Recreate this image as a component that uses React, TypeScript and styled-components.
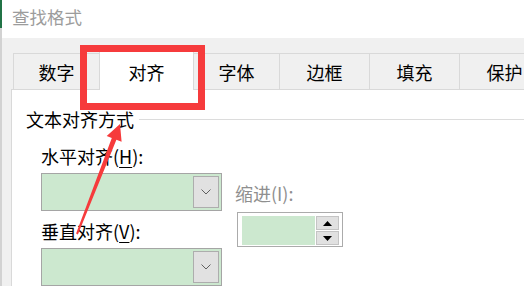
import React from "react";
import styled, { createGlobalStyle } from "styled-components";

const GlobalStyle = createGlobalStyle`
  html, body {
    margin: 0;
    padding: 0;
    background: #ffffff;
  }
  body {
    font-family: "Noto Sans CJK SC", "Noto Sans", sans-serif;
    color: #000000;
  }
`;

const Screen = styled.div`
  position: relative;
  display: flex;
  width: 524px;
  height: 286px;
  overflow: hidden;
`;

const EdgeStrip = styled.div`
  width: 2px;
  flex-shrink: 0;
  background: linear-gradient(to bottom, #217346 0, #217346 28px, #d2d2d2 28px);
`;

const Dialog = styled.div`
  flex: 1;
  display: flex;
  flex-direction: column;
`;

const TitleBar = styled.div`
  height: 38px;
  flex-shrink: 0;
  padding-left: 10px;
  box-sizing: border-box;
  background: #ffffff;
  font-size: 17.5px;
  line-height: 34px;
  color: #9c9c9c;
`;

const Body = styled.div`
  flex: 1;
  display: flex;
  flex-direction: column;
  padding-left: 9px;
  background: #f0f0f0;
`;

const TabStrip = styled.div`
  display: flex;
  align-items: flex-end;
  height: 36px;
  margin: 15px 0 0 2px;
  position: relative;
  z-index: 1;
`;

const Tab = styled.div<{ $width: number; $active?: boolean }>`
  flex-shrink: 0;
  box-sizing: border-box;
  width: ${(p) => p.$width}px;
  height: ${(p) => (p.$active ? 43 : 36)}px;
  margin: ${(p) => (p.$active ? "0 0 -1px -1px" : "0")};
  padding-top: ${(p) => (p.$active ? 6 : 0)}px;
  display: flex;
  align-items: center;
  justify-content: center;
  background: ${(p) => (p.$active ? "#ffffff" : "#f0f0f0")};
  border-top: 1px solid #d9d9d9;
  border-right: 1px solid #d9d9d9;
  border-left: ${(p) => (p.$active ? "1px solid #d9d9d9" : "none")};
  font-size: 18px;
  line-height: 24px;
  &:first-child {
    border-left: 1px solid #d9d9d9;
  }
`;

const Panel = styled.div`
  flex: 1;
  background: #ffffff;
  border-top: 1px solid #d9d9d9;
  border-left: 1px solid #d9d9d9;
  padding: 17px 0 0 14px;
`;

const GroupHeading = styled.div`
  display: flex;
  align-items: center;
  gap: 5px;
  font-size: 18px;
  line-height: 24px;
  &::after {
    content: "";
    flex: 1;
    height: 1px;
    background: #dcdcdc;
  }
`;

const FormGrid = styled.div`
  display: grid;
  grid-template-columns: 181px 120px;
  column-gap: 13px;
  margin-left: 15px;
`;

const Column = styled.div`
  display: flex;
  flex-direction: column;
`;

const FieldLabel = styled.div<{ $gap: number; $disabled?: boolean }>`
  margin-top: ${(p) => p.$gap}px;
  font-size: 18px;
  line-height: 24px;
  color: ${(p) => (p.$disabled ? "#8f8f8f" : "#000000")};
  u {
    text-underline-offset: 3px;
  }
`;

const ComboBox = styled.div`
  display: flex;
  justify-content: flex-end;
  align-items: stretch;
  box-sizing: border-box;
  height: 38px;
  margin-top: 5px;
  padding: 2px;
  background: #cce8cf;
  border: 1px solid #a5a5a5;
`;

const ComboButton = styled.div`
  width: 26px;
  box-sizing: border-box;
  display: flex;
  align-items: center;
  justify-content: center;
  background: #e1e1e1;
  border: 1px solid #adadad;
`;

const SpinBox = styled.div`
  display: flex;
  box-sizing: border-box;
  width: 106px;
  height: 35px;
  margin: 7px 0 0 2px;
  padding: 3px 3px 1px 4px;
  gap: 1px;
  background: #ffffff;
  border: 1px solid #ababab;
`;

const SpinField = styled.div`
  flex: 1;
  background: #cce8cf;
`;

const SpinButtons = styled.div`
  width: 23px;
  display: flex;
  flex-direction: column;
  gap: 1px;
`;

const SpinButton = styled.div`
  flex: 1;
  display: flex;
  align-items: center;
  justify-content: center;
  background: #e1e1e1;
  border: 1px solid #c4c4c4;
`;

const Highlight = styled.div`
  position: absolute;
  left: 80px;
  top: 45px;
  width: 125px;
  height: 65px;
  box-sizing: border-box;
  border: 7px solid #f63b3c;
  z-index: 2;
`;

const ArrowOverlay = styled.svg`
  position: absolute;
  left: 0;
  top: 0;
  width: 524px;
  height: 286px;
  z-index: 3;
  pointer-events: none;
`;

const Chevron = () => (
  <svg width="10" height="6" viewBox="0 0 10 6">
    <polyline points="0.5,0.5 5,5 9.5,0.5" fill="none" stroke="#606060" strokeWidth="1" />
  </svg>
);

const Triangle = ({ up }: { up?: boolean }) => (
  <svg width="9" height="5" viewBox="0 0 9 5">
    <polygon points={up ? "4.5,0 9,5 0,5" : "0,0 9,0 4.5,5"} fill="#000000" />
  </svg>
);

const tabs = [
  { label: "数字", width: 87 },
  { label: "对齐", width: 95, active: true },
  { label: "字体", width: 86 },
  { label: "边框", width: 90 },
  { label: "填充", width: 90 },
  { label: "保护", width: 90 },
];

const App = () => {
  return (
    <>
      <GlobalStyle />
      <Screen>
        <EdgeStrip />
        <Dialog>
          <TitleBar>查找格式</TitleBar>
          <Body>
            <TabStrip>
              {tabs.map((t) => (
                <Tab key={t.label} $width={t.width} $active={t.active}>
                  {t.label}
                </Tab>
              ))}
            </TabStrip>
            <Panel>
              <GroupHeading>文本对齐方式</GroupHeading>
              <FormGrid>
                <Column>
                  <FieldLabel $gap={13}>
                    水平对齐(<u>H</u>):
                  </FieldLabel>
                  <ComboBox>
                    <ComboButton>
                      <Chevron />
                    </ComboButton>
                  </ComboBox>
                  <FieldLabel $gap={8}>
                    垂直对齐(<u>V</u>):
                  </FieldLabel>
                  <ComboBox>
                    <ComboButton>
                      <Chevron />
                    </ComboButton>
                  </ComboBox>
                </Column>
                <Column>
                  <FieldLabel $gap={50} $disabled>
                    缩进(I):
                  </FieldLabel>
                  <SpinBox>
                    <SpinField />
                    <SpinButtons>
                      <SpinButton>
                        <Triangle up />
                      </SpinButton>
                      <SpinButton>
                        <Triangle />
                      </SpinButton>
                    </SpinButtons>
                  </SpinBox>
                </Column>
              </FormGrid>
            </Panel>
          </Body>
        </Dialog>
        <Highlight />
        <ArrowOverlay viewBox="0 0 524 286">
          <polygon
            points="120,124 121.6,141.8 116.4,139.8 77.9,234.4 76.1,233.6 111.8,138 106.7,136"
            fill="#f63b3c"
          />
        </ArrowOverlay>
      </Screen>
    </>
  );
};

export default App;
